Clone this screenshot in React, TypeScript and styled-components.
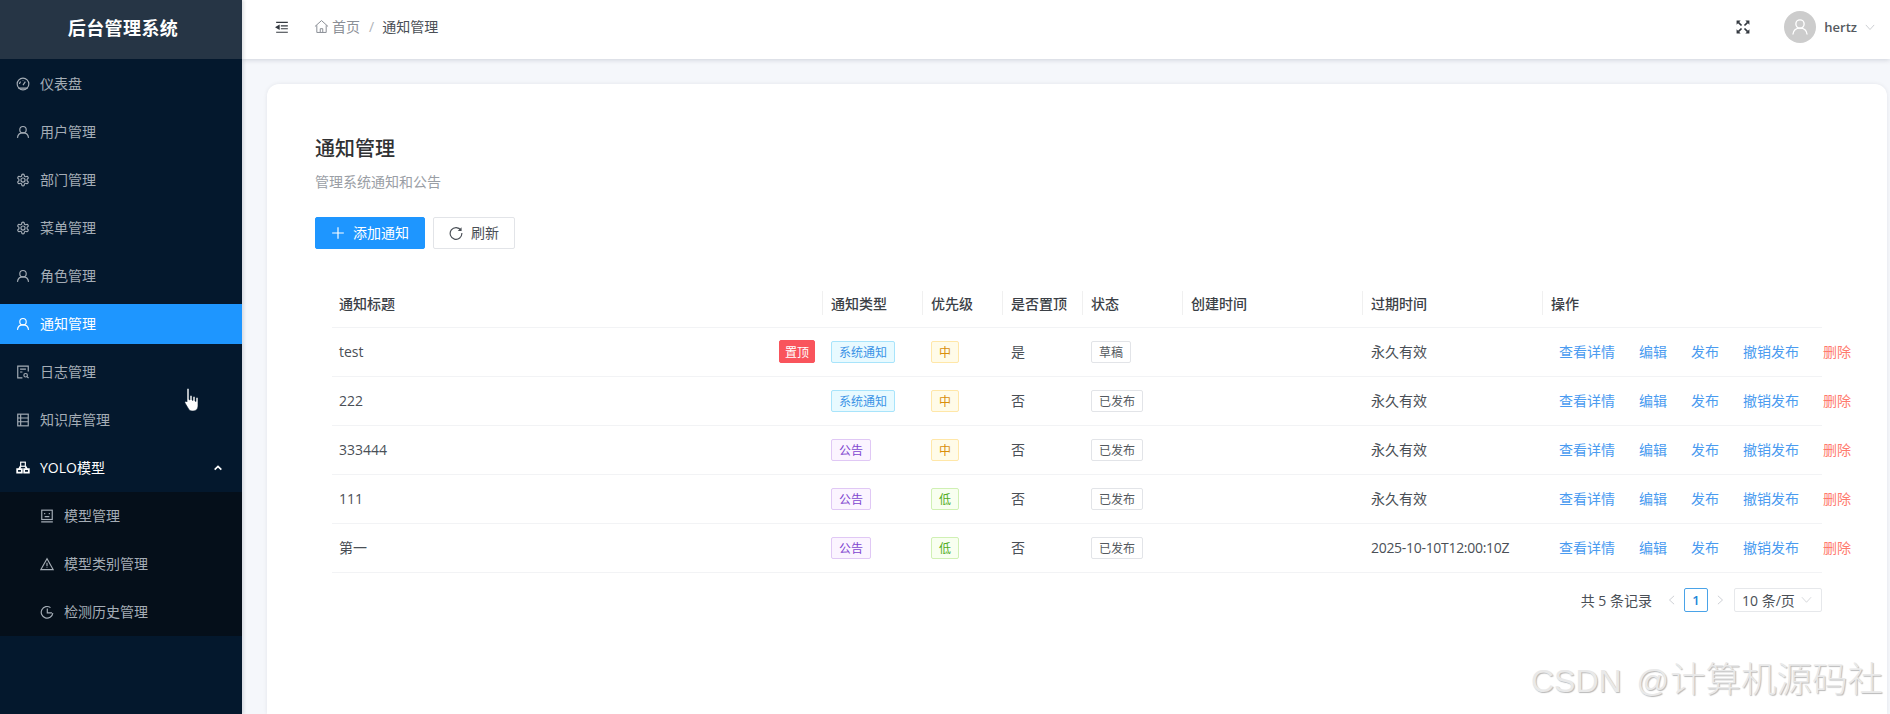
import styled, { createGlobalStyle } from "styled-components";

const FONT = `"Open Sans", "Noto Sans CJK SC", sans-serif`;

const GlobalStyle = createGlobalStyle`
    html, body {
        margin: 0;
        padding: 0;
        height: 100%;
        overflow: hidden;
        background: #f5f7fb;
        font-family: ${FONT};
    }
    * {
        box-sizing: border-box;
    }
`;

const Layout = styled.div`
    position: relative;
    display: grid;
    grid-template-columns: 242px 1fr;
    width: 1890px;
    height: 714px;
    overflow: hidden;
`;

const Sidebar = styled.aside`
    background: #04182d;
    box-shadow: 2px 0 3px rgba(0, 21, 41, 0.12);
    z-index: 2;
`;

const Logo = styled.div`
    height: 59px;
    display: flex;
    align-items: center;
    justify-content: center;
    background: #263545;
    color: #fff;
    font-size: 18px;
    font-weight: 700;
    letter-spacing: 0.4px;
    padding-left: 4px;
    padding-bottom: 6px;
`;

const Menu = styled.nav`
    padding-top: 1px;
    display: flex;
    flex-direction: column;
`;

const Item = styled.div<{ $active?: boolean; $open?: boolean; $sub?: boolean }>`
    height: 40px;
    margin: 4px 0;
    display: flex;
    align-items: center;
    gap: 10px;
    padding-left: ${(p) => (p.$sub ? "40px" : "16px")};
    padding-right: 19px;
    font-size: 14px;
    background: ${(p) => (p.$active ? "#1e96ff" : "transparent")};
    color: ${(p) => (p.$active || p.$open ? "#fff" : "#a5adb6")};
`;

const ItemLabel = styled.span`
    flex: 1;
    margin-bottom: 2px;
`;

const SubMenu = styled.div`
    background: #050f1a;
    display: flex;
    flex-direction: column;
`;

const Cursor = styled.svg`
    position: absolute;
    left: 184px;
    top: 387px;
    z-index: 5;
`;

const Main = styled.main`
    min-width: 0;
    display: flex;
    flex-direction: column;
`;

const Header = styled.header`
    height: 59px;
    flex: none;
    background: #fff;
    box-shadow: 0 1px 5px rgba(0, 21, 41, 0.16);
    display: flex;
    align-items: center;
    padding-left: 33px;
    padding-right: 15px;
    padding-bottom: 5px;
    z-index: 1;
`;

const Fold = styled.span`
    display: flex;
    color: #33383f;
    margin-right: 25px;
`;

const Crumbs = styled.div`
    display: flex;
    align-items: center;
    font-size: 14px;
    color: #8b8f96;
    flex: 1;
    padding-bottom: 2px;
`;

const CrumbHome = styled.span`
    display: flex;
    align-items: center;
    gap: 3px;
`;

const CrumbSep = styled.span`
    margin: 0 8px 0 9px;
    color: #b0b3b8;
`;

const CrumbNow = styled.span`
    color: #4a4f56;
`;

const HeaderRight = styled.div`
    display: flex;
    align-items: center;
    color: #33383f;
`;

const Avatar = styled.span`
    width: 32px;
    height: 32px;
    border-radius: 50%;
    background: #cccccc;
    color: #fff;
    display: flex;
    align-items: center;
    justify-content: center;
    margin-left: 34px;
    margin-right: 8px;
`;

const UserName = styled.span`
    font-size: 13px;
    font-weight: 600;
    color: #555a60;
    margin-right: 8px;
`;

const Chevron = styled.span`
    display: flex;
    color: #b4b7bc;
`;

const Content = styled.div`
    flex: 1;
    min-height: 0;
    padding: 25px 3px 0 25px;
`;

const Card = styled.section`
    height: 100%;
    background: #fff;
    border-radius: 12px 12px 0 0;
    box-shadow: 0 0 4px rgba(0, 21, 41, 0.08);
    padding: 51px 0 0 48px;
`;

const Title = styled.h2`
    margin: 0;
    font-size: 20px;
    line-height: 28px;
    font-weight: 500;
    color: #303133;
`;

const Subtitle = styled.p`
    margin: 9px 0 0;
    font-size: 14px;
    line-height: 20px;
    color: #9a9ea5;
`;

const Toolbar = styled.div`
    display: flex;
    gap: 8px;
    margin-top: 25px;
`;

const Button = styled.button<{ $primary?: boolean }>`
    height: 32px;
    display: flex;
    align-items: center;
    gap: 8px;
    padding: 0 15px;
    border-radius: 2px;
    font: inherit;
    font-size: 14px;
    border: 1px solid ${(p) => (p.$primary ? "#1e96ff" : "#e2e4e8")};
    background: ${(p) => (p.$primary ? "#1e96ff" : "#fff")};
    color: ${(p) => (p.$primary ? "#fff" : "#4a4f56")};
`;

const ButtonLabel = styled.span`
    margin-bottom: 2px;
`;

const Table = styled.table`
    table-layout: fixed;
    border-collapse: collapse;
    width: 1490px;
    margin-top: 30px;
    margin-left: 17px;
    font-size: 14px;
    color: #4a4f56;
`;

const Th = styled.th<{ $divider?: boolean }>`
    position: relative;
    height: 48px;
    padding: 0 7px 0 9px;
    text-align: left;
    font-weight: 500;
    color: #3b4046;
    border-bottom: 1px solid #f2f3f5;
    &:first-child {
        padding-left: 7px;
    }
    &::before {
        content: "";
        display: ${(p) => (p.$divider ? "block" : "none")};
        position: absolute;
        left: 0;
        top: 12px;
        bottom: 12px;
        width: 1px;
        background: #f0f0f0;
    }
`;

const Td = styled.td`
    height: 49px;
    padding: 0 7px 0 9px;
    white-space: nowrap;
    border-bottom: 1px solid #f2f3f5;
    &:first-child {
        padding-left: 7px;
    }
`;

const TitleCell = styled.div<{ $lift?: boolean }>`
    display: flex;
    align-items: center;
    justify-content: space-between;
    padding-bottom: ${(p) => (p.$lift ? "2px" : "0")};
`;

const CellText = styled.div<{ $date?: boolean }>`
    padding-bottom: ${(p) => (p.$date ? "0" : "2px")};
    letter-spacing: ${(p) => (p.$date ? "-0.3px" : "0")};
`;

const tagColors = {
    pin: ["#f9545c", "#f9545c", "#fff"],
    info: ["#e8faff", "#a8e4fb", "#3b93e6"],
    notice: ["#fbf4ff", "#e0c8f5", "#8146cf"],
    mid: ["#fffbe8", "#ffe7a8", "#d98e0b"],
    low: ["#f8fff0", "#d0f0b4", "#52ad1f"],
    plain: ["#fff", "#e2e4e8", "#555a60"],
};

const Tag = styled.span<{ $kind: keyof typeof tagColors }>`
    display: inline-flex;
    align-items: center;
    height: ${(p) => (p.$kind === "pin" ? "23px" : "22px")};
    padding: 0 ${(p) => (p.$kind === "pin" ? "5px" : "7px")};
    font-size: 12px;
    border-radius: 2px;
    border: 1px solid ${(p) => tagColors[p.$kind][1]};
    background: ${(p) => tagColors[p.$kind][0]};
    color: ${(p) => tagColors[p.$kind][2]};
`;

const Actions = styled.div`
    display: flex;
    gap: 24px;
    margin-left: 8px;
    padding-bottom: 2px;
`;

const Action = styled.a<{ $danger?: boolean }>`
    color: ${(p) => (p.$danger ? "#ff7a6e" : "#4a9bf0")};
`;

const Pager = styled.div`
    width: 1490px;
    margin-left: 17px;
    margin-top: 15px;
    display: flex;
    justify-content: flex-end;
    align-items: center;
    font-size: 14px;
    color: #4a4f56;
`;

const PagerTotal = styled.span`
    margin-right: 14px;
`;

const PagerArrow = styled.span`
    display: flex;
    width: 12px;
    justify-content: center;
    color: #c4c7cc;
`;

const PagerNum = styled.span`
    width: 24px;
    height: 24px;
    margin: 0 6px;
    display: flex;
    align-items: center;
    justify-content: center;
    border: 1px solid #4aa3e8;
    border-radius: 2px;
    color: #1e88d8;
    font-weight: 600;
    font-size: 13px;
`;

const PageSize = styled.div`
    width: 88px;
    height: 24px;
    margin-left: 8px;
    padding: 0 9px 0 7px;
    display: flex;
    align-items: center;
    justify-content: space-between;
    border: 1px solid #e6e8eb;
    border-radius: 2px;
    color: #c4c7cc;
`;

const PageSizeText = styled.span`
    color: #4a4f56;
`;

const Watermark = styled.div`
    position: absolute;
    right: 7px;
    bottom: 12px;
    display: flex;
    align-items: baseline;
    gap: 10px;
    color: #e9e9e9;
    text-shadow: 1px 1px 1px #b8b8b8;
    font-family: "Liberation Sans", "Noto Sans CJK SC", sans-serif;
    font-size: 32px;
    word-spacing: 6px;
    z-index: 4;
`;

const WatermarkCn = styled.span`
    font-size: 35.5px;
    font-family: "Noto Sans CJK SC", sans-serif;
    font-weight: 300;
    margin-left: -9px;
`;

type IconName =
    | "gauge" | "user" | "gear" | "log" | "book" | "model" | "card" | "warn" | "clock"
    | "home" | "fold" | "expand" | "plus" | "reload" | "up" | "down" | "left" | "right";

const paths: Record<IconName, React.ReactNode> = {
    gauge: (<><circle cx="12" cy="12" r="10" /><path d="M4 19h16M12 14l4-6M6 12a6 6 0 0 1 2-4M12 5.500v1" /></>),
    user: (<><circle cx="12" cy="8" r="5.500" /><path d="M2.500 22c.6-5.500 4.500-8.500 9.500-8.500s8.900 3 9.500 8.500" /></>),
    gear: (<><path d="M12.220 2h-.44a2 2 0 0 0-2 2v.18a2 2 0 0 1-1 1.730l-.43.25a2 2 0 0 1-2 0l-.15-.08a2 2 0 0 0-2.730.73l-.22.38a2 2 0 0 0 .73 2.730l.15.1a2 2 0 0 1 1 1.720v.51a2 2 0 0 1-1 1.740l-.15.09a2 2 0 0 0-.73 2.730l.22.38a2 2 0 0 0 2.730.73l.15-.08a2 2 0 0 1 2 0l.43.25a2 2 0 0 1 1 1.730V20a2 2 0 0 0 2 2h.44a2 2 0 0 0 2-2v-.18a2 2 0 0 1 1-1.730l.43-.25a2 2 0 0 1 2 0l.15.08a2 2 0 0 0 2.730-.73l.22-.39a2 2 0 0 0-.73-2.730l-.15-.08a2 2 0 0 1-1-1.740v-.5a2 2 0 0 1 1-1.740l.15-.09a2 2 0 0 0 .73-2.730l-.22-.38a2 2 0 0 0-2.730-.73l-.15.08a2 2 0 0 1-2 0l-.43-.25a2 2 0 0 1-1-1.730V4a2 2 0 0 0-2-2z" /><circle cx="12" cy="12" r="3.500" /></>),
    log: (<><path d="M21 11V2H3v20h8" /><path d="M7 7h10M7 12h4" /><circle cx="16.500" cy="17.500" r="3" /><path d="M19 20l2.500 2.500" /></>),
    book: (<><rect x="3" y="2" width="18" height="20" /><path d="M3 8.500h18M3 15h18M8 2v20" /></>),
    model: (<><rect x="8" y="2" width="8" height="7" /><path d="M2 14h8v6H2zM14 14h8v6h-8zM5 14l3-5M19 14l-3-5" strokeWidth="3" /></>),
    card: (<><rect x="3" y="2" width="18" height="16" /><path d="M2 22h20M8 7v2M16 7v2M8 13h8" /></>),
    warn: (<><path d="M12 3L1.500 21.500h21zM12 10v6M12 18v1" /></>),
    clock: (<><path d="M18 4.500A10 10 0 1 0 22 14" /><path d="M12.500 6v7.500h8" /></>),
    home: (<><path d="M1.500 12L12 2.500 22.500 12M4.500 10v11.500h15V10M10 21.500v-6h4v6" /></>),
    fold: (<><path d="M2 4h20M10 10h12M10 15h12M2 21h20" /><path d="M7 9.500v6l-5-3z" fill="currentColor" /></>),
    expand: (<><path d="M9.500 9.500L4 4M14.500 9.500L20 4M9.500 14.500L4 20M14.500 14.500L20 20" strokeWidth="2.800" /><path d="M1 1h7L1 8zM23 1h-7l7 7zM1 23h7l-7-7zM23 23h-7l7-7z" fill="currentColor" stroke="none" /></>),
    plus: (<path d="M12 2v20M2 12h20" />),
    reload: (<><path d="M20.500 7.500A10 10 0 1 0 22 12" /><path d="M21.500 2v6.500H15" fill="currentColor" stroke="none" /></>),
    up: (<path d="M4 16l8-8 8 8" />),
    down: (<path d="M2 7l10 11L22 7" />),
    left: (<path d="M17 2L6 12l11 10" />),
    right: (<path d="M7 2l11 10L7 22" />),
};

function Icon({ name, size = 14, weight = 2 }: { name: IconName; size?: number; weight?: number }) {
    return (
        <svg width={size} height={size} viewBox="0 0 24 24" fill="none" stroke="currentColor" strokeWidth={weight} style={{ flex: "none" }}>
            {paths[name]}
        </svg>
    );
}

const rows = [
    { title: "test", pinned: true, type: "系统通知", kind: "info", level: "中", levelKind: "mid", top: "是", status: "草稿", expire: "永久有效" },
    { title: "222", pinned: false, type: "系统通知", kind: "info", level: "中", levelKind: "mid", top: "否", status: "已发布", expire: "永久有效" },
    { title: "333444", pinned: false, type: "公告", kind: "notice", level: "中", levelKind: "mid", top: "否", status: "已发布", expire: "永久有效" },
    { title: "111", pinned: false, type: "公告", kind: "notice", level: "低", levelKind: "low", top: "否", status: "已发布", expire: "永久有效" },
    { title: "第一", pinned: false, type: "公告", kind: "notice", level: "低", levelKind: "low", top: "否", status: "已发布", expire: "2025-10-10T12:00:10Z" },
] as const;

const columns = [
    { label: "通知标题", width: 490 },
    { label: "通知类型", width: 100 },
    { label: "优先级", width: 80 },
    { label: "是否置顶", width: 80 },
    { label: "状态", width: 100 },
    { label: "创建时间", width: 180 },
    { label: "过期时间", width: 180 },
    { label: "操作", width: 280 },
];

const topMenu: { icon: IconName; label: string; active?: boolean }[] = [
    { icon: "gauge", label: "仪表盘" },
    { icon: "user", label: "用户管理" },
    { icon: "gear", label: "部门管理" },
    { icon: "gear", label: "菜单管理" },
    { icon: "user", label: "角色管理" },
    { icon: "user", label: "通知管理", active: true },
    { icon: "log", label: "日志管理" },
    { icon: "book", label: "知识库管理" },
];

const subMenu: { icon: IconName; label: string }[] = [
    { icon: "card", label: "模型管理" },
    { icon: "warn", label: "模型类别管理" },
    { icon: "clock", label: "检测历史管理" },
];

function App() {
    return (
        <Layout>
            <GlobalStyle />
            <Sidebar>
                <Logo>后台管理系统</Logo>
                <Menu>
                    {topMenu.map((m) => (
                        <Item key={m.label} $active={m.active}>
                            <Icon name={m.icon} />
                            <ItemLabel>{m.label}</ItemLabel>
                        </Item>
                    ))}
                    <Item $open>
                        <Icon name="model" />
                        <ItemLabel>YOLO模型</ItemLabel>
                        <Icon name="up" size={10} weight={4} />
                    </Item>
                    <SubMenu>
                        {subMenu.map((m) => (
                            <Item key={m.label} $sub>
                                <Icon name={m.icon} />
                                <ItemLabel>{m.label}</ItemLabel>
                            </Item>
                        ))}
                    </SubMenu>
                </Menu>
            </Sidebar>
            <Main>
                <Header>
                    <Fold><Icon name="fold" /></Fold>
                    <Crumbs>
                        <CrumbHome><Icon name="home" size={15} weight={1.6} />首页</CrumbHome>
                        <CrumbSep>/</CrumbSep>
                        <CrumbNow>通知管理</CrumbNow>
                    </Crumbs>
                    <HeaderRight>
                        <Icon name="expand" weight={1.6} />
                        <Avatar><Icon name="user" size={18} weight={1.8} /></Avatar>
                        <UserName>hertz</UserName>
                        <Chevron><Icon name="down" size={10} weight={1.6} /></Chevron>
                    </HeaderRight>
                </Header>
                <Content>
                    <Card>
                        <Title>通知管理</Title>
                        <Subtitle>管理系统通知和公告</Subtitle>
                        <Toolbar>
                            <Button $primary><Icon name="plus" /><ButtonLabel>添加通知</ButtonLabel></Button>
                            <Button><Icon name="reload" /><ButtonLabel>刷新</ButtonLabel></Button>
                        </Toolbar>
                        <Table>
                            <colgroup>
                                {columns.map((c) => <col key={c.label} width={c.width} />)}
                            </colgroup>
                            <thead>
                                <tr>
                                    {columns.map((c, i) => <Th key={c.label} $divider={i > 0}>{c.label}</Th>)}
                                </tr>
                            </thead>
                            <tbody>
                                {rows.map((r) => (
                                    <tr key={r.title}>
                                        <Td>
                                            <TitleCell $lift={r.title === "第一"}>
                                                {r.title}
                                                {r.pinned && <Tag $kind="pin">置顶</Tag>}
                                            </TitleCell>
                                        </Td>
                                        <Td><Tag $kind={r.kind}>{r.type}</Tag></Td>
                                        <Td><Tag $kind={r.levelKind}>{r.level}</Tag></Td>
                                        <Td><CellText>{r.top}</CellText></Td>
                                        <Td><Tag $kind="plain">{r.status}</Tag></Td>
                                        <Td></Td>
                                        <Td><CellText $date={r.expire !== "永久有效"}>{r.expire}</CellText></Td>
                                        <Td>
                                            <Actions>
                                                <Action>查看详情</Action>
                                                <Action>编辑</Action>
                                                <Action>发布</Action>
                                                <Action>撤销发布</Action>
                                                <Action $danger>删除</Action>
                                            </Actions>
                                        </Td>
                                    </tr>
                                ))}
                            </tbody>
                        </Table>
                        <Pager>
                            <PagerTotal>共 5 条记录</PagerTotal>
                            <PagerArrow><Icon name="left" size={10} weight={2} /></PagerArrow>
                            <PagerNum>1</PagerNum>
                            <PagerArrow><Icon name="right" size={10} weight={2} /></PagerArrow>
                            <PageSize>
                                <PageSizeText>10 条/页</PageSizeText>
                                <Icon name="down" size={11} weight={1.5} />
                            </PageSize>
                        </Pager>
                    </Card>
                </Content>
            </Main>
            <Cursor width="18" height="26" viewBox="0 0 18 26" fill="#fff">
                <path d="M3 1.500h2v11l1 .5V8.500h2V13l1 .5V9.500h2V14l1 .5v-4h2V19c0 3-2 5-5 5H8c-2 0-3-1-4-3l-3-5c-.5-1 .5-2 1.500-1.500L3 15z" stroke="#04182d" strokeWidth="0.6" />
            </Cursor>
            <Watermark>
                CSDN @<WatermarkCn>计算机源码社</WatermarkCn>
            </Watermark>
        </Layout>
    );
}

export default App;
